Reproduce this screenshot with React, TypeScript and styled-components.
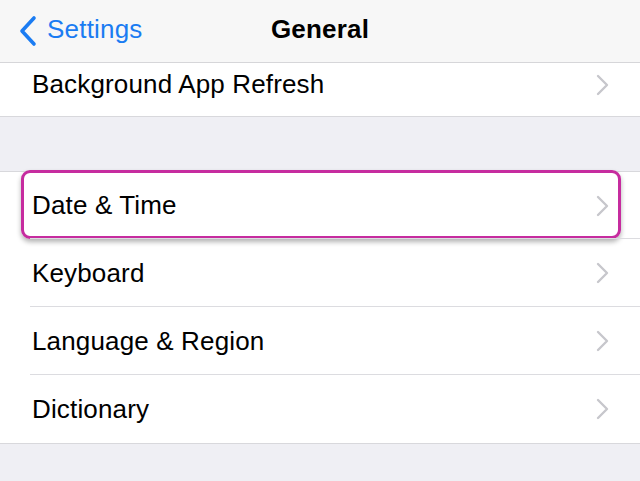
import styled, { createGlobalStyle } from 'styled-components'

const GlobalStyle = createGlobalStyle`
  html, body {
    margin: 0;
    padding: 0;
    background: #efeff4;
    font-family: 'Liberation Sans', Arial, sans-serif;
  }
`

const Screen = styled.div`
  width: 640px;
  height: 481px;
  overflow: hidden;
  background: #efeff4;
  display: flex;
  flex-direction: column;
`

const NavBar = styled.div`
  height: 62px;
  flex: none;
  background: #f7f7f7;
  border-bottom: 1px solid #d6d6d9;
  display: grid;
  grid-template-columns: 1fr auto 1fr;
  align-items: center;
`

const BackButton = styled.div`
  display: flex;
  align-items: center;
  gap: 10px;
  padding-left: 19px;
  color: #1b7cf2;
  font-size: 26px;
  letter-spacing: 0.2px;
  span {
    margin-top: -3px;
  }
`

const Title = styled.div`
  font-size: 26px;
  font-weight: bold;
  color: #000;
  letter-spacing: 0.2px;
  margin-top: -3px;
`

const Group = styled.div<{ $gapBefore?: number }>`
  flex: none;
  background: #fff;
  border-bottom: 1px solid #d8d8dc;
  margin-top: ${(p) => p.$gapBefore ?? 0}px;
  border-top: ${(p) => (p.$gapBefore ? '1px solid #d8d8dc' : 'none')};
`

// $lift moves the content up, for a row that is partly scrolled under the bar
const Row = styled.div<{ $height: number; $last?: boolean; $lift?: number }>`
  position: relative;
  box-sizing: border-box;
  height: ${(p) => p.$height}px;
  display: flex;
  align-items: center;
  justify-content: space-between;
  padding: 0 30px ${(p) => p.$lift ?? 0}px 32px;
  font-size: 26px;
  color: #000;
  letter-spacing: 0.15px;
  &::after {
    content: '';
    display: ${(p) => (p.$last ? 'none' : 'block')};
    position: absolute;
    left: 30px;
    right: 0;
    bottom: 0;
    height: 1px;
    background: #dcdce0;
  }
`

const Highlight = styled.div`
  position: absolute;
  left: 21px;
  right: 19px;
  top: -2px;
  bottom: 0;
  border: 3px solid #c62c9f;
  border-radius: 9px;
  box-shadow: 0 3px 5px rgba(0, 0, 0, 0.3);
  pointer-events: none;
`

const Label = styled.span`
  position: relative;
  z-index: 1;
`

const BackChevron = () => (
  <svg width="18" height="32" viewBox="0 0 18 32">
    <path
      d="M15 3 L3 16 L15 29"
      fill="none"
      stroke="#1b7cf2"
      strokeWidth="3.6"
      strokeLinecap="round"
      strokeLinejoin="round"
    />
  </svg>
)

const Disclosure = () => (
  <svg width="14" height="22" viewBox="0 0 14 22">
    <path
      d="M2 2 L11 11 L2 20"
      fill="none"
      stroke="#c7c7cc"
      strokeWidth="2.4"
      strokeLinecap="round"
      strokeLinejoin="round"
    />
  </svg>
)

const items = ['Keyboard', 'Language & Region', 'Dictionary']

export default function App() {
  return (
    <>
      <GlobalStyle />
      <Screen>
        <NavBar>
          <BackButton>
            <BackChevron />
            <span>Settings</span>
          </BackButton>
          <Title>General</Title>
          <div />
        </NavBar>
        <Group>
          <Row $height={53} $last $lift={10}>
            <Label>Background App Refresh</Label>
            <Disclosure />
          </Row>
        </Group>
        <Group $gapBefore={54}>
          <Row $height={67}>
            <Highlight />
            <Label>Date &amp; Time</Label>
            <Disclosure />
          </Row>
          {items.map((item, idx) => (
            <Row key={item} $height={68} $last={idx === items.length - 1}>
              <Label>{item}</Label>
              <Disclosure />
            </Row>
          ))}
        </Group>
      </Screen>
    </>
  )
}
